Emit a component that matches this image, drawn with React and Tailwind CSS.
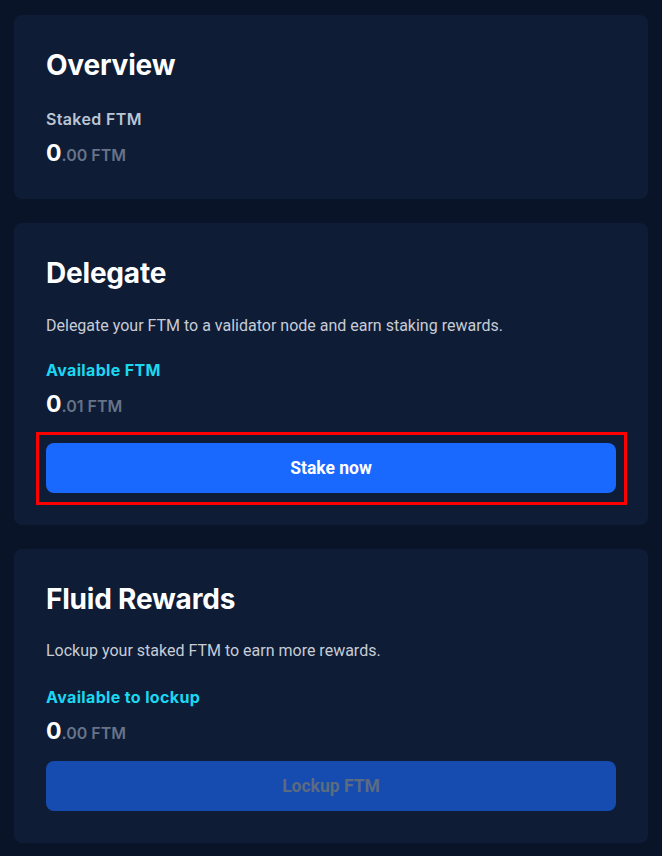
import React from 'react';

function Amount({ whole, rest }) {
  return (
    <div className="mt-2 h-7 flex items-baseline font-['Inter',_'Noto_Sans',_sans-serif]">
      <span className="text-[23px] font-bold text-white leading-7">{whole}</span>
      <span className="text-[16px] font-semibold text-[#667389] leading-7">{rest}</span>
    </div>
  );
}

function Card({ title, children }) {
  return (
    <div className="bg-[#0e1c36] rounded-lg px-8 pt-8 pb-8">
      <h2 className="text-[28px] font-bold text-white leading-9 tracking-[-0.2px] font-['Inter',_'Noto_Sans',_sans-serif]">{title}</h2>
      {children}
    </div>
  );
}

export default function App() {
  return (
    <div className="min-h-[856px] bg-[#0a1429] px-[14px] pt-[15px] pb-4 flex flex-col gap-6">
      <Card title="Overview">
        <div className="mt-6 text-[16px] font-semibold text-[#bcc5d4] leading-6 tracking-[0.35px] font-['Inter',_'Noto_Sans',_sans-serif]">Staked FTM</div>
        <Amount whole="0" rest=".00 FTM" />
      </Card>

      <Card title="Delegate">
        <p className="mt-[23px] text-base text-[#c7ccd5] leading-6 font-['Roboto',_'Liberation_Sans',_sans-serif]">
          Delegate your FTM to a validator node and earn staking rewards.
        </p>
        <div className="mt-5 text-[16px] font-bold text-[#1bd8f0] leading-6 tracking-[0.35px] font-['Inter',_'Noto_Sans',_sans-serif]">Available FTM</div>
        <Amount whole="0" rest=".01 FTM" />
        <div className="relative mt-[25px]">
          <button className="w-full h-[50px] rounded-lg bg-[#1969ff] text-white text-[17.5px] font-bold font-['Roboto',_'Liberation_Sans',_sans-serif]">
            Stake now
          </button>
          <div className="absolute left-[-10px] right-[-11px] top-[-11px] bottom-[-12px] border-[3px] border-[#ff0000] pointer-events-none"></div>
        </div>
      </Card>

      <Card title="Fluid Rewards">
        <p className="mt-[22px] text-base text-[#c7ccd5] leading-6 font-['Roboto',_'Liberation_Sans',_sans-serif]">
          Lockup your staked FTM to earn more rewards.
        </p>
        <div className="mt-[22px] text-[16px] font-bold text-[#1bd8f0] leading-6 tracking-[0.35px] font-['Inter',_'Noto_Sans',_sans-serif]">Available to lockup</div>
        <Amount whole="0" rest=".00 FTM" />
        <button className="mt-4 w-full h-[50px] rounded-lg bg-[#164bb0] text-[#5d6b80] text-[17.5px] font-bold font-['Roboto',_'Liberation_Sans',_sans-serif]">
          Lockup FTM
        </button>
      </Card>
    </div>
  );
}
